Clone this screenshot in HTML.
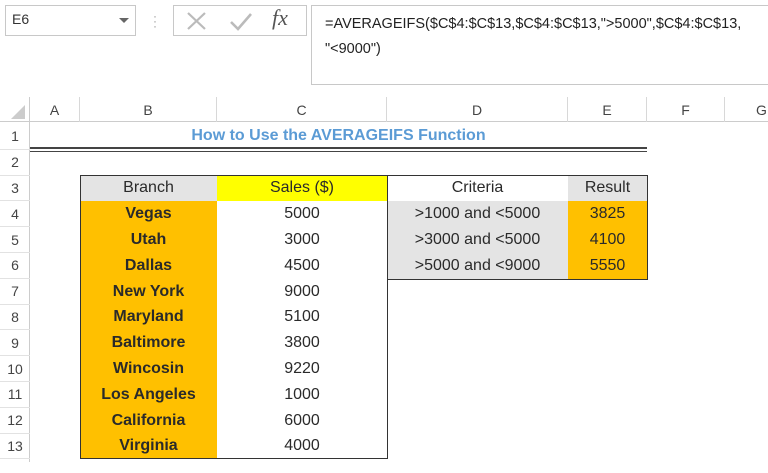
<!DOCTYPE html>
<html><head><style>
*{margin:0;padding:0;box-sizing:border-box}
body{width:768px;height:471px;background:#fff;position:relative;overflow:hidden;font-family:"Liberation Sans",sans-serif;color:#222}
.a{position:absolute}
.c{position:absolute;display:flex;align-items:center;justify-content:center;font-size:16px;color:#2a2a2a}
.rh{position:absolute;left:0;width:30px;font-size:14px;color:#444;display:flex;align-items:center;justify-content:center;border-bottom:1px solid #e2e2e2}
.ch{position:absolute;top:97px;height:25px;font-size:14px;color:#444;display:flex;align-items:center;justify-content:center;border-right:1px solid #d8d8d8}
.o{background:#FFC000}.g{background:#e4e4e4}.y{background:#FFFF00}
#s{position:absolute;left:0;top:2px;width:768px;height:471px}
</style></head><body>
<!-- formula bar -->
<div class="a" style="left:5px;top:5px;width:131px;height:31px;border:1px solid #c8c8c8"></div>
<div class="a" style="left:12px;top:11px;font-size:14px;color:#333">E6</div>
<div class="a" style="left:119px;top:18px;width:0;height:0;border-left:5px solid transparent;border-right:5px solid transparent;border-top:5px solid #666"></div>
<div class="a" style="left:153px;top:14px;color:#999;font-size:12px;line-height:5px">·<br>·<br>·</div>
<div class="a" style="left:173px;top:5px;width:134px;height:31px;border:1px solid #c8c8c8"></div>
<svg class="a" style="left:185px;top:10px" width="24" height="22"><path d="M3 3L20 19M20 3L3 19" stroke="#bbb" stroke-width="2.2" fill="none"/></svg>
<svg class="a" style="left:228px;top:10px" width="26" height="22"><path d="M3 12L10 19L23 4" stroke="#bbb" stroke-width="2.6" fill="none"/></svg>
<div class="a" style="left:272px;top:5px;font-family:'Liberation Serif',serif;font-style:italic;font-size:22px;color:#555">fx</div>
<div class="a" style="left:311px;top:5px;width:460px;height:80px;border:1px solid #c8c8c8"></div>
<div class="a" style="left:325px;top:12px;font-size:14.5px;line-height:25px;color:#222">=AVERAGEIFS($C$4:$C$13,$C$4:$C$13,"&gt;5000",$C$4:$C$13,<br>"&lt;9000")</div>
<!-- headers -->
<div class="a" style="left:0;top:97px;width:768px;height:25px;border-bottom:1px solid #ccc"></div>
<div class="a" style="left:0;top:97px;width:30px;height:25px;border-right:1px solid #ccc"></div>
<svg class="a" style="left:10px;top:104px" width="16" height="16"><path d="M15 1L15 15L1 15Z" fill="#ccc"/></svg>
<div class="ch" style="left:30px;width:50px">A</div>
<div class="ch" style="left:80px;width:137px">B</div>
<div class="ch" style="left:217px;width:170px">C</div>
<div class="ch" style="left:387px;width:181px">D</div>
<div class="ch" style="left:568px;width:79px">E</div>
<div class="ch" style="left:647px;width:78px">F</div>
<div class="ch" style="left:725px;width:60px;justify-content:flex-start;padding-left:31px">G</div>
<div class="a" style="left:29px;top:122px;width:1px;height:340px;background:#ccc"></div>
<div id="s">
<div class="rh" style="top:122px;height:25.8px">1</div>
<div class="rh" style="top:147.8px;height:25.8px">2</div>
<div class="rh" style="top:173.6px;height:25.8px">3</div>
<div class="rh" style="top:199.4px;height:25.8px">4</div>
<div class="rh" style="top:225.2px;height:25.8px">5</div>
<div class="rh" style="top:251px;height:25.8px">6</div>
<div class="rh" style="top:276.8px;height:25.8px">7</div>
<div class="rh" style="top:302.6px;height:25.8px">8</div>
<div class="rh" style="top:328.4px;height:25.8px">9</div>
<div class="rh" style="top:354.2px;height:25.8px">10</div>
<div class="rh" style="top:380px;height:25.8px">11</div>
<div class="rh" style="top:405.8px;height:25.8px">12</div>
<div class="rh" style="top:431.6px;height:25.8px">13</div>
<!-- title -->
<div class="c" style="left:30px;top:121px;width:617px;height:25px;color:#5B9BD5;font-weight:bold;font-size:16px">How to Use the AVERAGEIFS Function</div>
<div class="a" style="left:30px;top:145px;width:617px;height:5px;border-top:2px solid #444;border-bottom:1px solid #444"></div>
<!-- table 1 -->
<div class="a" style="left:80px;top:173px;width:308px;height:284px;border:1.5px solid #333;z-index:2"></div>
<div class="c g" style="left:80px;top:173px;width:137px;height:26.4px">Branch</div>
<div class="c y" style="left:217px;top:173px;width:170px;height:26.4px">Sales ($)</div>
<div class="a o" style="left:80px;top:199.4px;width:137px;height:258px"></div>
<div class="c" style="left:80px;top:199.4px;width:137px;height:25.8px;font-weight:bold">Vegas</div><div class="c" style="left:217px;top:199.4px;width:170px;height:25.8px">5000</div>
<div class="c" style="left:80px;top:225.2px;width:137px;height:25.8px;font-weight:bold">Utah</div><div class="c" style="left:217px;top:225.2px;width:170px;height:25.8px">3000</div>
<div class="c" style="left:80px;top:251px;width:137px;height:25.8px;font-weight:bold">Dallas</div><div class="c" style="left:217px;top:251px;width:170px;height:25.8px">4500</div>
<div class="c" style="left:80px;top:276.8px;width:137px;height:25.8px;font-weight:bold">New York</div><div class="c" style="left:217px;top:276.8px;width:170px;height:25.8px">9000</div>
<div class="c" style="left:80px;top:302.6px;width:137px;height:25.8px;font-weight:bold">Maryland</div><div class="c" style="left:217px;top:302.6px;width:170px;height:25.8px">5100</div>
<div class="c" style="left:80px;top:328.4px;width:137px;height:25.8px;font-weight:bold">Baltimore</div><div class="c" style="left:217px;top:328.4px;width:170px;height:25.8px">3800</div>
<div class="c" style="left:80px;top:354.2px;width:137px;height:25.8px;font-weight:bold">Wincosin</div><div class="c" style="left:217px;top:354.2px;width:170px;height:25.8px">9220</div>
<div class="c" style="left:80px;top:380px;width:137px;height:25.8px;font-weight:bold">Los Angeles</div><div class="c" style="left:217px;top:380px;width:170px;height:25.8px">1000</div>
<div class="c" style="left:80px;top:405.8px;width:137px;height:25.8px;font-weight:bold">California</div><div class="c" style="left:217px;top:405.8px;width:170px;height:25.8px">6000</div>
<div class="c" style="left:80px;top:431.6px;width:137px;height:25.8px;font-weight:bold">Virginia</div><div class="c" style="left:217px;top:431.6px;width:170px;height:25.8px">4000</div>
<!-- table 2 -->
<div class="a" style="left:387px;top:173px;width:261px;height:105px;border:1.5px solid #333;z-index:2"></div>
<div class="c" style="left:387px;top:173px;width:181px;height:26.4px">Criteria</div>
<div class="c g" style="left:568px;top:173px;width:79px;height:26.4px">Result</div>
<div class="c g" style="left:387px;top:199.4px;width:181px;height:25.8px">&gt;1000 and &lt;5000</div><div class="c o" style="left:568px;top:199.4px;width:79px;height:25.8px">3825</div>
<div class="c g" style="left:387px;top:225.2px;width:181px;height:25.8px">&gt;3000 and &lt;5000</div><div class="c o" style="left:568px;top:225.2px;width:79px;height:25.8px">4100</div>
<div class="c g" style="left:387px;top:251px;width:181px;height:26px">&gt;5000 and &lt;9000</div><div class="c o" style="left:568px;top:251px;width:79px;height:26px">5550</div>
</div>
</body></html>
